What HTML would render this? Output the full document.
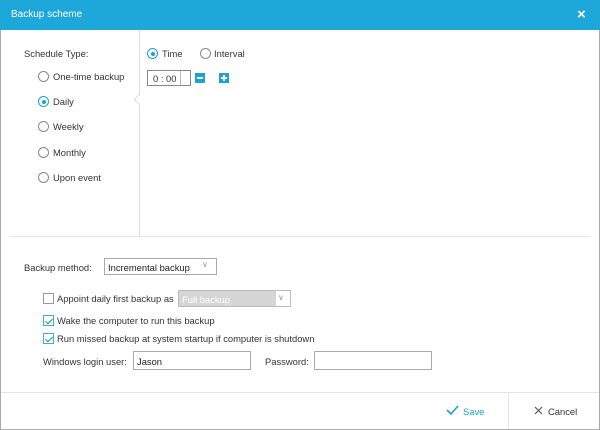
<!DOCTYPE html>
<html><head><style>
*{margin:0;padding:0;box-sizing:border-box}
body{width:600px;height:430px;background:#fff;font-family:"Liberation Sans",sans-serif;font-size:9.4px;color:#333;position:relative;overflow:hidden}
.a{position:absolute;white-space:nowrap}
.r{position:absolute;width:11px;height:11px;border:1px solid #888;border-radius:50%;background:#fff}
.r.on{border-color:#1ba3d4}
.r.on::after{content:"";position:absolute;left:2.5px;top:2.5px;width:4px;height:4px;border-radius:50%;background:#1ba3d4}
.c{position:absolute;width:11px;height:11px;border:1px solid #999;background:#fff}
.c.on{border-color:#3fb0c8}
.c.on::after{content:"";position:absolute;left:3px;top:0.5px;width:3px;height:6px;border:solid #1b8fb8;border-width:0 1.5px 1.5px 0;transform:rotate(45deg)}
.box{position:absolute;border:1px solid #aaa;background:#fff}
</style></head><body>
<div class="a" style="left:0;top:0;width:600px;height:30px;background:#1ea7d9"></div>
<div class="a" style="left:11px;top:9px;color:#fff;font-size:10px">Backup scheme</div>
<div class="a" style="left:577px;top:6px;color:#fff;font-size:15px;font-weight:bold">×</div>
<div class="a" style="left:0;top:30px;width:1px;height:400px;background:#aaa"></div>
<div class="a" style="left:599px;top:30px;width:1px;height:400px;background:#aaa"></div>
<div class="a" style="left:0;top:429px;width:600px;height:1px;background:#aaa"></div>
<div class="a" style="left:139px;top:30px;width:1px;height:206px;background:#ddd"></div>
<div class="a" style="left:135px;top:96px;width:7px;height:7px;background:#fff;border-left:1px solid #ddd;border-bottom:1px solid #ddd;transform:rotate(45deg)"></div>
<div class="a" style="left:10px;top:236px;width:580px;height:1px;background:#e2e2e2"></div>
<div class="a" style="left:1px;top:392px;width:598px;height:1px;background:#e6e6e6"></div>
<div class="a" style="left:508px;top:392px;width:1px;height:37px;background:#e6e6e6"></div>

<div class="a" style="left:24px;top:48px">Schedule Type:</div>
<div class="r" style="left:38px;top:71px"></div><div class="a" style="left:53px;top:71px">One-time backup</div>
<div class="r on" style="left:38px;top:96px"></div><div class="a" style="left:53px;top:96px">Daily</div>
<div class="r" style="left:38px;top:121px"></div><div class="a" style="left:53px;top:121px">Weekly</div>
<div class="r" style="left:38px;top:147px"></div><div class="a" style="left:53px;top:147px">Monthly</div>
<div class="r" style="left:38px;top:172px"></div><div class="a" style="left:53px;top:172px">Upon event</div>

<div class="r on" style="left:147px;top:48px"></div><div class="a" style="left:162px;top:48px">Time</div>
<div class="r" style="left:200px;top:48px"></div><div class="a" style="left:214px;top:48px">Interval</div>
<div class="box" style="left:147px;top:70px;width:44px;height:16px;border-color:#888"></div>
<div class="a" style="left:153px;top:73px">0 : 00</div>
<div class="a" style="left:180px;top:71px;width:1px;height:14px;background:#bbb"></div>
<div class="a" style="left:195px;top:73px;width:10px;height:10px;background:#1ba3d4"></div>
<div class="a" style="left:197px;top:77px;width:6px;height:2px;background:#fff"></div>
<div class="a" style="left:219px;top:73px;width:10px;height:10px;background:#1ba3d4"></div>
<div class="a" style="left:221px;top:77px;width:6px;height:2px;background:#fff"></div>
<div class="a" style="left:223px;top:75px;width:2px;height:6px;background:#fff"></div>

<div class="a" style="left:24px;top:262px">Backup method:</div>
<div class="box" style="left:104px;top:258px;width:113px;height:17px"></div>
<div class="a" style="left:108px;top:262px;color:#222">Incremental backup</div>
<div class="a" style="left:202px;top:260px;color:#999;font-size:8px">∨</div>

<div class="c" style="left:43px;top:293px"></div><div class="a" style="left:57px;top:293px">Appoint daily first backup as</div>
<div class="box" style="left:178px;top:290px;width:113px;height:17px;background:#d6d6d6;border-color:#bbb"></div>
<div class="a" style="left:182px;top:294px;color:#fff">Full backup</div>
<div class="a" style="left:276px;top:291px;width:14px;height:15px;background:#fff"></div>
<div class="a" style="left:278px;top:293px;color:#999;font-size:8px">∨</div>
<div class="c on" style="left:43px;top:315px"></div><div class="a" style="left:57px;top:315px">Wake the computer to run this backup</div>
<div class="c on" style="left:43px;top:333px"></div><div class="a" style="left:57px;top:333px">Run missed backup at system startup if computer is shutdown</div>
<div class="a" style="left:43px;top:356px">Windows login user:</div>
<div class="box" style="left:133px;top:351px;width:118px;height:19px"></div>
<div class="a" style="left:137px;top:356px;color:#222">Jason</div>
<div class="a" style="left:265px;top:356px">Password:</div>
<div class="box" style="left:314px;top:351px;width:118px;height:19px"></div>

<svg class="a" style="left:446px;top:405px" width="13" height="10"><path d="M1 5 L5 9 L12 1" stroke="#1ba3c8" stroke-width="1.6" fill="none"/></svg>
<div class="a" style="left:463px;top:406px;color:#1ba3c8">Save</div>
<svg class="a" style="left:534px;top:406px" width="9" height="9"><path d="M1 1L8 8M8 1L1 8" stroke="#555" stroke-width="1.2"/></svg>
<div class="a" style="left:548px;top:406px">Cancel</div>
</body></html>
